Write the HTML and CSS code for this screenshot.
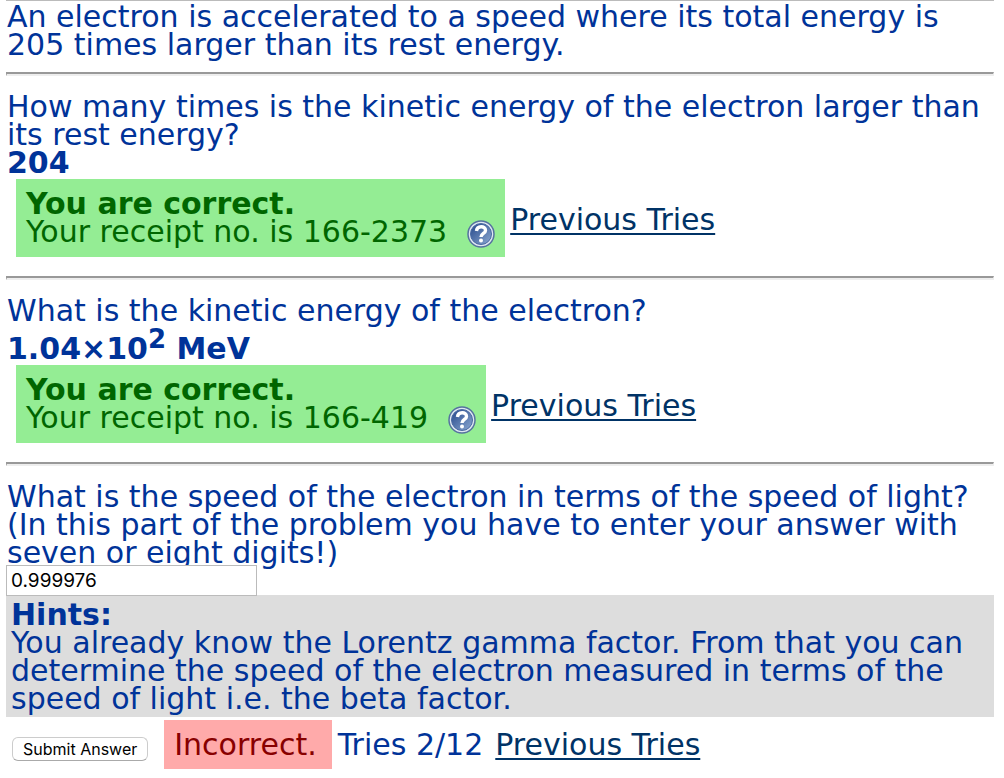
FILE: index.html
```html
<!DOCTYPE html>
<html lang="en">
<head>
    <meta charset="UTF-8">
    <meta name="viewport" content="width=device-width, initial-scale=1.0">
    <title>Electron Energy Problem</title>
    <link rel="stylesheet" href="styles.css">
</head>
<body>
    <svg class="defs" aria-hidden="true">
        <defs>
            <linearGradient id="ball" x1="0" y1="0" x2="1" y2="1">
                <stop offset="0" stop-color="#24478a"/>
                <stop offset="1" stop-color="#8eaad2"/>
            </linearGradient>
        </defs>
        <symbol id="help" viewBox="0 0 28 28">
            <circle cx="14" cy="14" r="13" fill="#dfe7f2" stroke="#56739f" stroke-width="1.5"/>
            <circle cx="14" cy="14" r="10.5" fill="url(#ball)" stroke="#4a6aa3"/>
            <path d="M9.500 11C10 5.500 18.500 5.500 18.500 10.500C18.500 13.500 14 13.500 14 17" fill="none" stroke="#fff" stroke-width="3.400"/>
            <circle cx="14" cy="20.500" r="2" fill="#fff"/>
        </symbol>
    </svg>
    <form class="problem" onsubmit="return false">
        <p>An electron is accelerated to a speed where its total energy is 205 times larger than its rest energy.</p>
        <hr>
        <p>How many times is the kinetic energy of the electron larger than its rest energy?</p>
        <p><b>204</b></p>
        <div class="status">
            <div class="correct">
                <b>You are correct.</b>
                <div class="receipt">Your receipt no. is 166-2373 <a href="#" aria-label="Help"><svg class="help"><use href="#help"/></svg></a></div>
            </div>
            <a href="#" class="tries-link">Previous Tries</a>
        </div>
        <hr>
        <p>What is the kinetic energy of the electron?</p>
        <p class="value"><b>1.04×10<sup>2</sup> MeV</b></p>
        <div class="status">
            <div class="correct">
                <b>You are correct.</b>
                <div class="receipt">Your receipt no. is 166-419 <a href="#" aria-label="Help"><svg class="help"><use href="#help"/></svg></a></div>
            </div>
            <a href="#" class="tries-link">Previous Tries</a>
        </div>
        <hr>
        <p><label for="answer">What is the speed of the electron in terms of the speed of light? (In this part of the problem you have to enter your answer with seven or eight digits!)</label></p>
        <input type="text" id="answer" class="answer" value="0.999976">
        <div class="hints">
            <b>Hints:</b>
            <p>You already know the Lorentz gamma factor. From that you can determine the speed of the electron measured in terms of the speed of light i.e. the beta factor.</p>
        </div>
        <div class="submit-row">
            <button type="submit">Submit Answer</button>
            <div class="incorrect">Incorrect.</div>
            <span class="tries">Tries 2/12</span>
            <a href="#">Previous Tries</a>
        </div>
    </form>
</body>
</html>
```
FILE: styles.css
```css
body {
    margin: 0;
    background: #fff;
    color: #003399;
    font-family: Verdana, "DejaVu Sans", sans-serif;
    font-size: 30px;
    line-height: 28px;
}
.defs {
    position: absolute;
    width: 0;
    height: 0;
}
.problem {
    margin: 0 10px 0 6px;
    padding: 2px 0 8px;
    border-top: 1px solid #bbb;
}
p {
    margin: 0;
    padding-left: 1px;
}
hr {
    height: 0;
    margin: 13px 0 17px;
    border: 2px solid;
    border-width: 2px 1px;
    border-color: #999 #eee #eee #999;
}
a {
    color: #003366;
    text-decoration-thickness: 2px;
    text-underline-offset: 3px;
}
.status {
    display: flex;
    align-items: center;
    gap: 5px;
    margin: 2px 0 19px 10px;
}
.tries-link {
    padding-top: 3px;
}
.correct {
    padding: 11px 10px;
    background: #94ed94;
    color: #006600;
}
.correct b {
    display: block;
}
.receipt {
    display: flex;
    align-items: center;
    gap: 20px;
    height: 28px;
}
.receipt a {
    display: flex;
    padding-top: 4px;
}
.help {
    width: 28px;
    height: 28px;
}
.value {
    padding-top: 10px;
}
sup {
    font-size: 26px;
    line-height: 0;
}
.answer {
    display: block;
    position: relative;
    box-sizing: border-box;
    width: 251px;
    height: 31px;
    margin: -2px 0 -1px;
    padding: 0 4px;
    border: 1px solid #bbb;
    background: #fff;
    color: #000;
    font: 19px Inter, sans-serif;
}
.hints {
    padding: 6px 5px 4px;
    background: #ddd;
}
.hints p {
    padding: 0;
}
.submit-row {
    display: flex;
    align-items: baseline;
    gap: 6px;
    padding: 3px 6px;
}
button {
    height: 24px;
    margin-right: 10px;
    padding: 0 10px;
    border: 1px solid #ccc;
    border-bottom-color: #aaa;
    border-radius: 6px;
    background: #fff;
    color: #000;
    font: 16px Inter, sans-serif;
}
.incorrect {
    padding: 11px 15px 10px 10px;
    background: #ffaaaa;
    color: #880000;
}
.tries {
    margin-right: 6px;
}
```
